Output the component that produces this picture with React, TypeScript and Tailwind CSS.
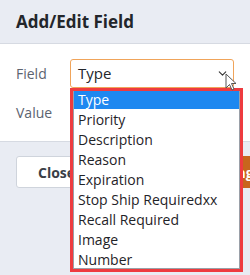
import { ChevronDown } from "lucide-react";

const options = [
	"Type",
	"Priority",
	"Description",
	"Reason",
	"Expiration",
	"Stop Ship Requiredxx",
	"Recall Required",
	"Image",
	"Number",
];

export default function App() {
	return (
		<div className="relative w-[250px] h-[275px] overflow-hidden bg-[#e9ecf3] font-['Open_Sans',sans-serif]">
			<div className="h-[44px] border-b border-[#d6dae2] px-4 flex items-center">
				<h1 className="text-[17px] font-bold text-[#23262b]">Add/Edit Field</h1>
			</div>

			<div className="bg-white px-4 pt-[15px] pb-[14px] flex flex-col gap-[10px]">
				<div className="flex items-center h-[29px]">
					<span className="w-[54px] text-[14px] text-[#5c6370]">Field</span>
					<div className="relative flex-1 h-[29px] rounded-[3px] border border-[#f0a45a] flex items-center pl-[7px]">
						<span className="text-[15px] text-[#23262b]">Type</span>
						<ChevronDown className="absolute right-[4px] top-[7px] w-[13px] h-[13px] text-[#333]" strokeWidth={2} />
					</div>
				</div>
				<div className="flex items-center h-[29px]">
					<span className="w-[54px] text-[14px] text-[#5c6370]">Value</span>
				</div>
			</div>

			<div className="border-t border-[#d6dae2] px-4 pt-[14px] flex items-center justify-between">
				<button className="h-[32px] w-[80px] rounded-[3px] border border-[#cfd4dc] bg-white text-[14px] font-bold text-[#3a3f47] text-left pl-[21px]">
					Close
				</button>
				<button className="h-[32px] rounded-[3px] bg-[#c8651c] text-[14px] font-bold text-white pl-[4px] pr-3 -mr-[40px]">
					Change
				</button>
			</div>

			<div className="absolute left-[70px] top-[88px] w-[173px] h-[184px] border-[3px] border-[#ee3b3f] bg-white">
				<div className="h-full border-x border-b border-[#9aa0a8]">
					{options.map((o, i) => (
						<div
							key={o}
							className={
								i === 0
									? "h-[18px] mb-[2px] leading-[17px] pl-[4px] text-[14px] bg-[#1e88f0] text-white"
									: "h-[20px] leading-[17px] pl-[4px] text-[14px] text-[#1f2328]"
							}
						>
							{o}
						</div>
					))}
				</div>
			</div>

			<svg className="absolute left-[225px] top-[73px]" width="14" height="20" viewBox="0 0 14 20">
				<path d="M1 1 L1 15 L4.5 11.5 L7 17 L9 16 L6.5 10.5 L11 10.5 Z" fill="white" stroke="#555" strokeWidth="1" />
			</svg>
		</div>
	);
}
